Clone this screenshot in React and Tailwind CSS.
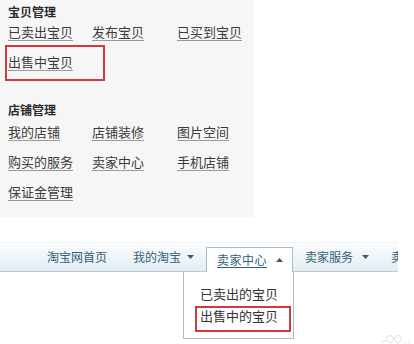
import React from "react";

const font = { fontFamily: '"Noto Sans CJK SC", "Noto Sans", sans-serif' };

function Link({ children }) {
  return (
    <span className="text-[13px] leading-[22px] text-[#3c3c3c] underline decoration-[#9a9a9a] underline-offset-[3px]">
      {children}
    </span>
  );
}

function Row({ items }) {
  return (
    <div className="grid grid-cols-[84px_85px_80px] h-[22px]">
      {items.map((t, i) => (
        <div key={i}>{t ? <Link>{t}</Link> : null}</div>
      ))}
    </div>
  );
}

function Down() {
  return (
    <svg width="7" height="4" viewBox="0 0 7 4" className="block">
      <path d="M0 0H7L3.5 4Z" fill="#3a5a6e" />
    </svg>
  );
}
function Up() {
  return (
    <svg width="7" height="4" viewBox="0 0 7 4" className="block">
      <path d="M0 4H7L3.5 0Z" fill="#3a5a6e" />
    </svg>
  );
}

export default function App() {
  return (
    <div className="w-[414px] h-[344px] bg-white overflow-hidden relative" style={font}>
      {/* top panel */}
      <div className="relative w-[254px] h-[217px] bg-[#f6f6f6] pl-[8px] pt-[3px]">
        <div className="text-[12px] leading-[18px] font-bold text-[#2a2a2a]">宝贝管理</div>
        <div className="-mt-[3px] flex flex-col gap-[8px]">
          <Row items={["已卖出宝贝", "发布宝贝", "已买到宝贝"]} />
          <Row items={["出售中宝贝", "", ""]} />
        </div>
        <div className="mt-[31px] text-[12px] leading-[18px] font-bold text-[#2a2a2a]">店铺管理</div>
        <div className="-mt-[1px] flex flex-col gap-[8px]">
          <Row items={["我的店铺", "店铺装修", "图片空间"]} />
          <Row items={["购买的服务", "卖家中心", "手机店铺"]} />
          <Row items={["保证金管理", "", ""]} />
        </div>
        <div className="absolute left-[5px] top-[45px] w-[100px] h-[36px] border-2 border-[#cf3a3e]" />
      </div>

      {/* nav bar */}
      <div className="mt-[25px] relative w-[398px] h-[30px]">
        <div className="absolute inset-0 bg-gradient-to-b from-[#fbfcfd] to-[#e4edf3] border-t border-[#edf2f6] border-b border-b-[#b8cbd7]" />
        <div className="relative flex items-end h-[30px] pl-[47px] text-[12px] text-[#2f6079] whitespace-nowrap overflow-hidden">
          <div className="h-[30px] flex items-center">淘宝网首页</div>
          <div className="ml-[26px] h-[30px] flex items-center">
            <span className="w-[48px]">我的淘宝</span>
            <span className="ml-[6px]"><Down /></span>
          </div>
          <div className="ml-[12px] h-[25px] bg-white border border-b-0 border-[#a8bccb] flex items-center pl-[10px] pr-[9px] relative z-10">
            <span className="w-[50px] tracking-[0.5px] underline decoration-[#2f6079] underline-offset-[2px]">卖家中心</span>
            <span className="ml-[9px]"><Up /></span>
          </div>
          <div className="ml-[12px] h-[30px] flex items-center">
            <span className="w-[48px]">卖家服务</span>
            <span className="ml-[9px]"><Down /></span>
          </div>
          <div className="ml-[22px] h-[30px] flex items-center">卖</div>
        </div>
        {/* dropdown */}
        <div className="absolute left-[183px] top-[30px] w-[111px] h-[67px] bg-white border border-t-0 border-[#a8bccb] z-0">
          <div className="pl-[16px] pt-[11px] text-[13px] leading-[22px] text-[#333]">已卖出的宝贝</div>
          <div className="pl-[16px] text-[13px] leading-[22px] text-[#333]">出售中的宝贝</div>
          <div className="absolute left-[11px] top-[34px] w-[96px] h-[26px] border-2 border-[#cf3a3e]" />
        </div>
      </div>

      {/* faint watermark */}
      <svg className="absolute left-[378px] top-[330px]" width="34" height="14" viewBox="0 0 34 14">
        <g fill="none" stroke="#e2e2e2" strokeWidth="1">
          <circle cx="12" cy="9" r="3.5" />
          <circle cx="20" cy="9" r="3.5" />
          <path d="M4 13 Q6 8 8 12" />
          <path d="M26 12 L28 13 M30 12 L32 13" />
        </g>
      </svg>
    </div>
  );
}
